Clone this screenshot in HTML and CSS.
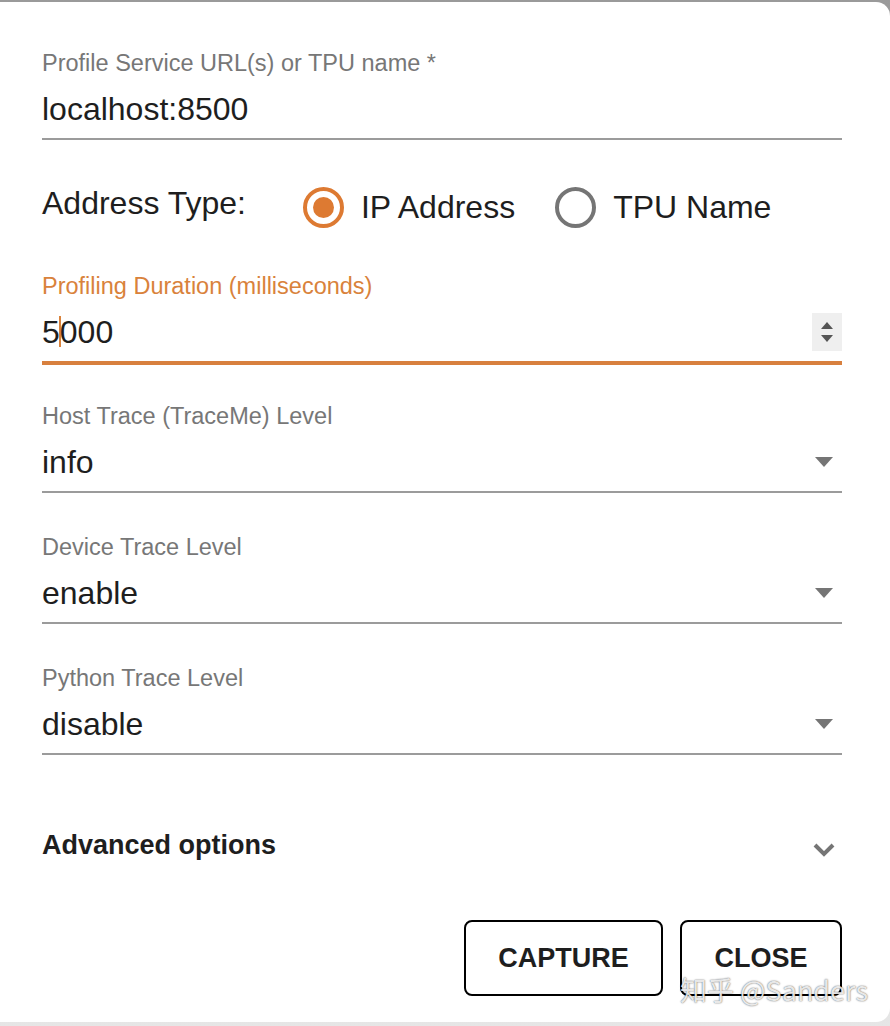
FILE: index.html
```html
<!DOCTYPE html>
<html lang="en">
<head>
<meta charset="utf-8">
<title>Capture Profile</title>
<link rel="stylesheet" href="styles.css">
</head>
<body>
<div class="dialog">
  <div class="field">
    <div class="label">Profile Service URL(s) or TPU name *</div>
    <div class="value-row"><span class="value">localhost:8500</span></div>
  </div>

  <div class="radio-row">
    <span class="radio-title">Address Type:</span>
    <span class="radio-option"><span class="radio checked"></span><span class="radio-text">IP Address</span></span>
    <span class="radio-option"><span class="radio"></span><span class="radio-text">TPU Name</span></span>
  </div>

  <div class="field focused">
    <div class="label">Profiling Duration (milliseconds)</div>
    <div class="value-row">
      <span class="value">5<span class="caret"></span>000</span>
      <span class="spinner">
        <svg width="30" height="38" viewBox="0 0 30 38"><path d="M15 9 L21 16 L9 16 Z" fill="#555"/><path d="M9 22 L21 22 L15 29 Z" fill="#555"/></svg>
      </span>
    </div>
  </div>

  <div class="field select">
    <div class="label">Host Trace (TraceMe) Level</div>
    <div class="value-row"><span class="value">info</span><span class="arrow"></span></div>
  </div>

  <div class="field select">
    <div class="label">Device Trace Level</div>
    <div class="value-row"><span class="value">enable</span><span class="arrow"></span></div>
  </div>

  <div class="field select">
    <div class="label">Python Trace Level</div>
    <div class="value-row"><span class="value">disable</span><span class="arrow"></span></div>
  </div>

  <div class="advanced">
    <span class="advanced-title">Advanced options</span>
    <svg class="chevron" width="24" height="16" viewBox="0 0 24 16"><path d="M3 3 L12 12 L21 3" fill="none" stroke="#757575" stroke-width="4"/></svg>
  </div>

  <div class="actions">
    <button class="btn capture">CAPTURE</button>
    <button class="btn close">CLOSE</button>
  </div>

  <div class="watermark">知乎 @Sanders</div>
</div>
</body>
</html>
```

FILE: styles.css
```css
html, body {
  margin: 0;
  padding: 0;
}
body {
  width: 890px;
  height: 1026px;
  overflow: hidden;
  background: linear-gradient(#9a9a9a, #e6e6e6);
  font-family: "Liberation Sans", Arial, sans-serif;
}
.dialog {
  position: relative;
  margin-top: 2px;
  height: 1020px;
  background: #fff;
  border-radius: 0 14px 14px 0;
  padding: 47px 48px 0 42px;
  box-sizing: border-box;
}
.field {
  border-bottom: 2px solid #9b9b9b;
  padding-bottom: 9px;
}
.label {
  font-size: 23.5px;
  line-height: 28px;
  color: #777;
}
.value-row {
  display: flex;
  align-items: center;
  justify-content: space-between;
  height: 40px;
  margin-top: 12px;
}
.value {
  font-size: 32px;
  line-height: 40px;
  color: #1e1e1e;
  position: relative;
}
.radio-row {
  display: flex;
  align-items: center;
  height: 42px;
  margin-top: 46px;
  margin-bottom: 44px;
}
.radio-title {
  font-size: 32px;
  color: #1e1e1e;
  margin-right: 57px;
  position: relative;
  top: -4px;
}
.radio-option {
  display: flex;
  align-items: center;
  margin-right: 40px;
}
.radio {
  width: 41px;
  height: 41px;
  box-sizing: border-box;
  border: 4px solid #757575;
  border-radius: 50%;
  margin-right: 17px;
  display: flex;
  align-items: center;
  justify-content: center;
}
.radio.checked {
  border-color: #dd7a32;
}
.radio.checked::after {
  content: "";
  width: 21px;
  height: 21px;
  border-radius: 50%;
  background: #dd7a32;
}
.radio-text {
  font-size: 32px;
  color: #1e1e1e;
}
.field.focused {
  border-bottom: 4px solid #d8803e;
  margin-bottom: 37px;
}
.field.focused .label {
  color: #d9823b;
}
.caret {
  display: inline-block;
  width: 2px;
  height: 31px;
  background: #d9823b;
  vertical-align: -4px;
  margin: 0 -1px;
}
.spinner {
  width: 30px;
  height: 38px;
  background: #efefef;
  display: flex;
}
.field.select {
  margin-bottom: 40px;
}
.arrow {
  width: 0;
  height: 0;
  border-left: 9px solid transparent;
  border-right: 9px solid transparent;
  border-top: 10px solid #757575;
  margin-right: 9px;
}
.advanced {
  display: flex;
  align-items: center;
  justify-content: space-between;
  margin-top: 70px;
  height: 40px;
}
.advanced-title {
  font-size: 27px;
  font-weight: bold;
  color: #1e1e1e;
}
.chevron {
  margin-right: 6px;
  margin-top: 10px;
}
.actions {
  display: flex;
  justify-content: flex-end;
  gap: 17px;
  margin-top: 55px;
}
.btn {
  height: 76px;
  background: #fff;
  border: 2px solid #000;
  border-radius: 8px;
  font-family: "Liberation Sans", Arial, sans-serif;
  font-size: 27px;
  font-weight: bold;
  color: #1e1e1e;
  padding: 0;
}
.btn.capture {
  width: 199px;
}
.btn.close {
  width: 162px;
}
.watermark {
  position: absolute;
  left: 680px;
  top: 968px;
  font-family: "Noto Sans CJK SC", "Liberation Sans", sans-serif;
  font-size: 27px;
  color: rgba(255, 255, 255, 0.85);
  text-shadow: 0 0 2px rgba(0, 0, 0, 0.45), 0 0 1px rgba(0, 0, 0, 0.4);
  white-space: nowrap;
}
```
